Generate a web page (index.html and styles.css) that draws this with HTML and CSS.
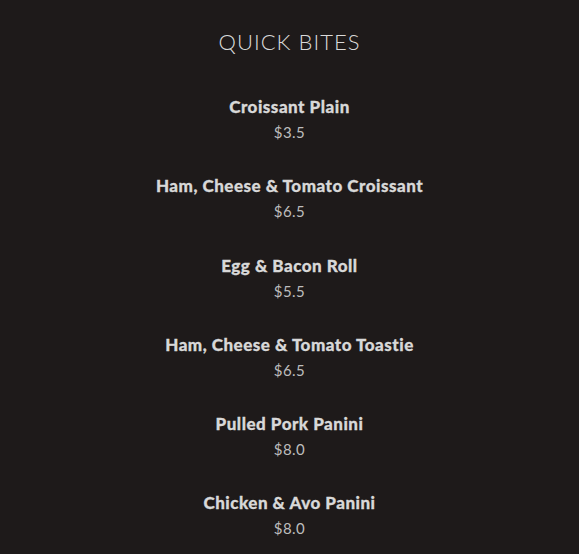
FILE: index.html
```html
<!DOCTYPE html>
<html>
<head>
<meta charset="utf-8">
<link rel="stylesheet" href="styles.css">
</head>
<body>
<main class="menu">
  <h1 class="title">QUICK BITES</h1>
  <ul class="items">
    <li class="item"><span class="name">Croissant Plain</span><span class="price">$3.5</span></li>
    <li class="item"><span class="name">Ham, Cheese &amp; Tomato Croissant</span><span class="price">$6.5</span></li>
    <li class="item"><span class="name">Egg &amp; Bacon Roll</span><span class="price">$5.5</span></li>
    <li class="item"><span class="name">Ham, Cheese &amp; Tomato Toastie</span><span class="price">$6.5</span></li>
    <li class="item"><span class="name">Pulled Pork Panini</span><span class="price">$8.0</span></li>
    <li class="item"><span class="name">Chicken &amp; Avo Panini</span><span class="price">$8.0</span></li>
  </ul>
</main>
</body>
</html>
```
FILE: styles.css
```css
html, body {
  margin: 0;
  padding: 0;
  background: #1e1a1a;
  height: 100%;
}
body {
  font-family: Lato, "Noto Sans", sans-serif;
  overflow: hidden;
}
.menu {
  display: flex;
  flex-direction: column;
  align-items: center;
  padding-top: 29px;
}
.title {
  margin: 0;
  font-size: 22px;
  line-height: 26px;
  font-weight: 300;
  letter-spacing: 1px;
  color: #d9d9d9;
}
.items {
  list-style: none;
  margin: 42px 0 0;
  padding: 0;
  display: flex;
  flex-direction: column;
  align-items: center;
  gap: 34.3px;
}
.item {
  display: flex;
  flex-direction: column;
  align-items: center;
  gap: 5px;
}
.name {
  font-size: 17px;
  line-height: 20px;
  font-weight: 900;
  color: #d8d8d8;
  letter-spacing: 0.5px;
  -webkit-text-stroke: 0.3px #d8d8d8;
}
.price {
  font-size: 15px;
  line-height: 20px;
  font-weight: 400;
  color: #bdbdbd;
  letter-spacing: 0.4px;
}
```
